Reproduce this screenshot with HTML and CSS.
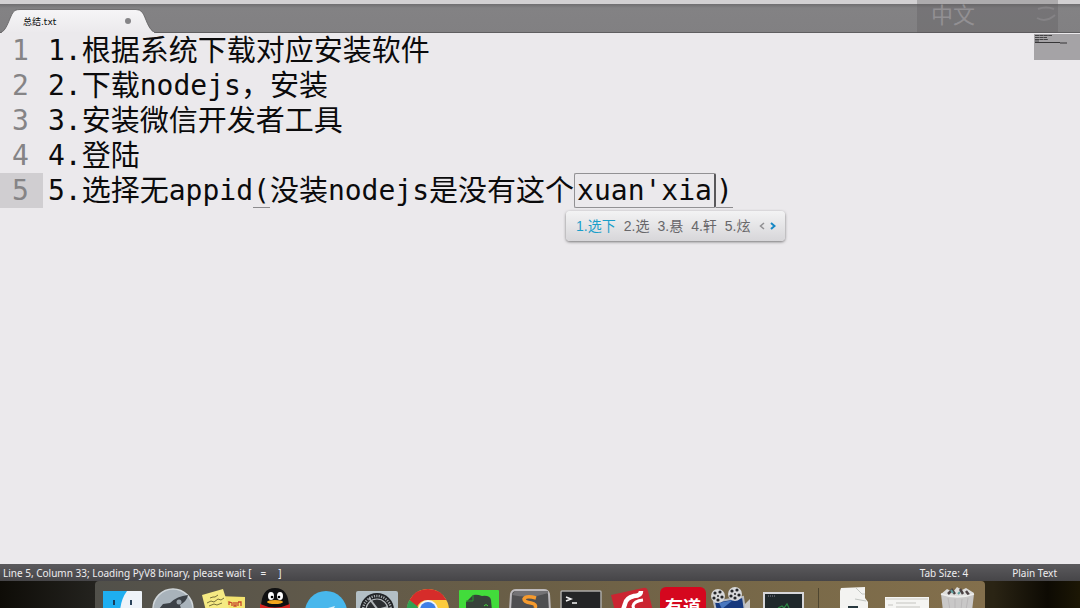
FILE: index.html
```
<!DOCTYPE html>
<html lang="zh-CN">

<head>
    <meta charset="UTF-8">
    <meta name="viewport" content="width=device-width, initial-scale=1.0">
    <title>总结.txt</title>
    <link rel="stylesheet" href="styles.css">
</head>

<body>

    <header class="tab-bar">
        <div class="tab">
            <svg class="tab-shape" viewBox="0 0 156 24" preserveAspectRatio="none" aria-hidden="true">
                <defs>
                    <linearGradient id="tabFill" x1="0" y1="0" x2="0" y2="1">
                        <stop offset="0" stop-color="#f6f5f7" />
                        <stop offset="1" stop-color="#ebe9ec" />
                    </linearGradient>
                </defs>
                <path d="M0 24 C8 22 10 4 15 1.500 Q17 0.500 20 0.500 H136 Q140 0.500 142 3 C146 8 148 22 156 24 Z" fill="url(#tabFill)" stroke="#5f5e60" stroke-width="0.800" />
                <path d="M2 24 H154" stroke="#ebe9ec" stroke-width="2" />
            </svg>
            <button class="tab-title">总结.txt</button>
            <span class="tab-dirty"></span>
        </div>
        <div class="input-hud">
            <span>中文</span>
            <svg class="hud-mark" viewBox="0 0 20 16" aria-hidden="true">
                <path d="M2 3 Q10 0 18 3 M1 12 Q10 17 19 9" />
            </svg>
        </div>
    </header>

    <main class="editor">
        <ol class="lines">
            <li class="line"><span class="num">1</span><span class="code">1.<b>根据系统下载对应安装软件</b></span></li>
            <li class="line"><span class="num">2</span><span class="code">2.<b>下载</b>nodejs<b>，安装</b></span></li>
            <li class="line"><span class="num">3</span><span class="code">3.<b>安装微信开发者工具</b></span></li>
            <li class="line"><span class="num">4</span><span class="code">4.<b>登陆</b></span></li>
            <li class="line current"><span class="num">5</span><span class="code">5.<b>选择无</b>appid<span class="bracket">(</span><b>没装</b>nodejs<b>是没有这个</b><span class="composing">xuan'xia<span class="candidates">
                <button class="picked">1.选下</button>
                <button>2.选</button>
                <button>3.悬</button>
                <button>4.轩</button>
                <button>5.炫</button>
                <button class="arrow" aria-label="Previous"><svg viewBox="0 0 6 8"><path d="M5 1 L1.500 4 L5 7" /></svg></button>
                <button class="arrow next" aria-label="Next"><svg viewBox="0 0 6 8"><path d="M1 1 L4.500 4 L1 7" /></svg></button>
            </span></span><span class="bracket">)</span></span></li>
        </ol>
        <svg class="minimap" viewBox="0 0 46 26" aria-hidden="true">
            <rect width="46" height="26" fill="#a5a3a6" />
            <path d="M1 1.500 H18 M1 3.500 H13 M1 5.500 H14 M1 7 H5" stroke="#454446" stroke-width="1.200" stroke-dasharray="4 .4" />
            <path d="M1 8.500 H26 M26 9 H33" stroke="#363537" stroke-width="1.200" />
        </svg>
    </main>

    <footer class="status-bar">
        <span class="status-message">Line 5, Column 33; Loading PyV8 binary, please wait [</span>
        <span class="spinner">=</span>
        <span class="spinner-end">]</span>
        <span class="tab-size">Tab Size: 4</span>
        <span class="syntax">Plain Text</span>
    </footer>

    <div class="desktop">
        <nav class="dock">
            <div class="dock-group">
                <!-- Finder -->
                <svg class="app" viewBox="0 0 46 27">
                    <rect x="4" y="10" width="39" height="20" rx="1" fill="#eef3f9" />
                    <path d="M4 10 H28 Q22 18 21 30 H4 Z" fill="#1eaef0" />
                    <path d="M15 19 V24 M32 19 V24" stroke="#17314a" stroke-width="1.800" />
                </svg>
                <!-- Launchpad -->
                <svg class="app" viewBox="0 0 46 27">
                    <circle cx="23" cy="28" r="20" fill="#a9b3bb" stroke="#d0d6da" stroke-width="1.500" />
                    <path d="M38 14 Q27 15 20 22 L13 23 L9 28 H31 L30 24 Q37 20 38 14 Z" fill="#3c4147" />
                    <circle cx="29" cy="21" r="2.500" fill="#9aa3aa" />
                </svg>
                <!-- Stickies -->
                <svg class="app" viewBox="0 0 46 27">
                    <path d="M17 15 L44 16 V30 H17 Z" fill="#f3e36f" />
                    <path d="M1 14 L22 8 L29 30 H5 Z" fill="#f5ea83" />
                    <path d="M9 17 l3 -1 2 0 3 -2 M6 22 l4 -2 3 1 4 -3 3 1 3 -2 M8 25 l5 -2 3 1 5 -2" fill="none" stroke="#777039" stroke-width="1" />
                    <path d="M28 24 v-3 l3 1 v3 m2 -4 v4 h2 v-4 m2 0 v4 m0 -4 h3 v4" fill="none" stroke="#c6472c" stroke-width="1.300" />
                </svg>
                <!-- QQ -->
                <svg class="app" viewBox="0 0 46 27">
                    <path d="M9 27 Q9 7 23 7 Q37 7 37 27 Z" fill="#101011" />
                    <ellipse cx="19" cy="15" rx="3" ry="4" fill="#fff" />
                    <ellipse cx="28" cy="15" rx="3" ry="4" fill="#fff" />
                    <circle cx="20" cy="16" r="1.300" />
                    <circle cx="27" cy="16" r="1.300" />
                    <ellipse cx="23" cy="21" rx="8" ry="2" fill="#f3a51c" />
                    <path d="M8 23 Q23 30 38 23 V28 H8 Z" fill="#d42320" />
                </svg>
                <!-- Bird -->
                <svg class="app" viewBox="0 0 46 27">
                    <circle cx="23" cy="31" r="21" fill="#48b7ec" />
                    <path d="M25 27 L32 25 L31 27 Z" fill="#d8f0fc" />
                </svg>
                <!-- System preferences -->
                <svg class="app" viewBox="0 0 46 27">
                    <rect x="2" y="10" width="42" height="22" rx="2" fill="#b3bfc5" />
                    <circle cx="23" cy="29" r="17" fill="#202225" />
                    <circle cx="23" cy="29" r="14" fill="none" stroke="#a2a7aa" stroke-width="2.500" stroke-dasharray="1.200 1.200" />
                    <circle cx="23" cy="29" r="11" fill="#2b2e31" stroke="#b6babd" stroke-width="1.200" />
                    <path d="M15 17 L24 29 M23 29 L34 26" stroke="#aeb3b6" stroke-width="2" />
                </svg>
                <!-- Chrome -->
                <svg class="app" viewBox="0 0 46 27">
                    <circle cx="23" cy="29" r="21" fill="#fccb3d" />
                    <path d="M4.500 19 A21 21 0 0 1 41.500 19 H23 Q14 19 12 27 Z" fill="#d62c2a" />
                    <path d="M4.500 19 Q1 24 2 30 H15 L12 25 Z" fill="#31a153" />
                    <circle cx="23" cy="29" r="10" fill="#f2f5fa" />
                    <circle cx="23" cy="29" r="8" fill="#3f80e6" />
                </svg>
                <!-- Evernote -->
                <svg class="app" viewBox="0 0 46 27">
                    <rect x="3" y="9" width="40" height="22" rx="1" fill="#42dc3b" />
                    <path d="M10 21 L17 14 Q21 13 26 15 Q34 14 35 19 L36 30 H10 Z" fill="#37423a" />
                    <path d="M10 20 H17 V14" fill="none" stroke="#299a2d" stroke-width="1" />
                    <path d="M28 25 Q30 22 32 25" fill="none" stroke="#42dc3b" stroke-width="1" />
                </svg>
                <!-- Sublime Text -->
                <svg class="app" viewBox="0 0 46 27">
                    <path d="M4 13 Q5 9 9 9 H37 Q41 9 42 13 L43 30 H3 Z" fill="#4f4f51" stroke="#bdbabd" stroke-width="2" />
                    <path d="M5 14 Q24 18 41 12 V10 H8 Z" fill="#737275" />
                    <path d="M29 17 Q19 14 17 18 Q17 21 24 22 Q30 23 28 27" fill="none" stroke="#f59a2e" stroke-width="3.500" />
                </svg>
                <!-- Terminal -->
                <svg class="app" viewBox="0 0 46 27">
                    <rect x="3" y="10" width="40" height="22" rx="1" fill="#242526" stroke="#aaa9a6" stroke-width="1.500" />
                    <path d="M8 16 L13 18 L8 20 M14 22 H19" fill="none" stroke="#f3f3f3" stroke-width="1.500" />
                </svg>
                <!-- Red tile -->
                <svg class="app" viewBox="0 0 46 27">
                    <path d="M2 14 L34 7 Q38 6 39 10 L44 30 H6 Z" fill="#cb2531" />
                    <path d="M32 10 Q32 15 25 15 Q17 17 16 23 L14 29" fill="none" stroke="#fff" stroke-width="4.500" />
                    <path d="M34 19 Q25 20 24 25 L25 29" fill="none" stroke="#fff" stroke-width="3" />
                </svg>
                <!-- Youdao -->
                <svg class="app" viewBox="0 0 46 27">
                    <rect x="0" y="6" width="46" height="34" rx="6" fill="#d5071e" />
                    <text class="youdao" x="5" y="33">有道</text>
                </svg>
                <!-- Film player -->
                <svg class="app" viewBox="0 0 46 27">
                    <path d="M3 21 L32 16 L34 30 H5 Z" fill="#17397d" stroke="#b7bac0" stroke-width="2" />
                    <path d="M8 22 L22 19 L11 28 Z" fill="#4977be" />
                    <path d="M34 23 L39 18 V28 H34 Z" fill="#c8c6c4" />
                    <circle cx="7" cy="15" r="7" fill="#d7d8da" />
                    <circle cx="24" cy="13" r="7" fill="#d7d8da" />
                    <g fill="#242629">
                        <circle cx="7" cy="15" r="1" /><circle cx="4" cy="12" r="1.600" /><circle cx="9" cy="11" r="1.600" /><circle cx="11" cy="16" r="1.600" /><circle cx="7" cy="19" r="1.600" /><circle cx="3" cy="17" r="1.600" />
                        <circle cx="24" cy="13" r="1" /><circle cx="21" cy="10" r="1.600" /><circle cx="26" cy="9" r="1.600" /><circle cx="28" cy="14" r="1.600" /><circle cx="24" cy="17" r="1.600" /><circle cx="20" cy="15" r="1.600" />
                    </g>
                </svg>
                <!-- Activity monitor -->
                <svg class="app" viewBox="0 0 46 27">
                    <rect x="2" y="12" width="39" height="22" fill="#20282b" stroke="#d6d6d9" stroke-width="2" />
                    <path d="M6 15 H13" stroke="#889" stroke-width="1" stroke-dasharray="1 1" />
                    <path d="M16 27 L20 25 L22 27 L25 23 L27 27" fill="none" stroke="#2d8844" stroke-width="1.200" />
                </svg>
            </div>
            <span class="divider"></span>
            <div class="dock-group">
                <!-- Documents stack -->
                <svg class="app" viewBox="0 0 46 27">
                    <path d="M7 10 L8 7 L32 6 V17 L35 21 V30 H7 Z" fill="#f3f3f1" />
                    <path d="M23 7 L29 13 H32 M22 18 L33 20" fill="none" stroke="#c2c6c2" stroke-width="1" />
                    <rect x="15" y="25" width="10" height="4" fill="#27383e" />
                </svg>
                <!-- Minimised window -->
                <svg class="app" viewBox="0 0 46 27">
                    <rect x="1" y="16" width="44" height="16" fill="#f5f5f3" />
                    <path d="M2 18 H44" stroke="#d8d7d2" stroke-width="1.500" />
                    <path d="M12 22 H32 M4 24 H9 M12 26 H36" stroke="#c5c5c1" stroke-width="1" />
                </svg>
                <!-- Trash -->
                <svg class="app" viewBox="0 0 46 27">
                    <path d="M6 13 L12 8 L18 11 L22 6 L27 9 L31 7 L39 12 L36 18 H9 Z" fill="#dededd" />
                    <path d="M13 13 L17 9 L20 13 M25 8 L28 13 M31 10 L34 14" stroke="#4c4244" stroke-width="2.500" fill="none" />
                    <path d="M16 9 L18 12 M23 13 L25 11" stroke="#60a0a0" stroke-width="2" />
                    <path d="M6 13 Q22 19 39 13 L37 30 H8 Z" fill="#c9c8c8" />
                    <path d="M6 13 Q22 19 39 13" fill="none" stroke="#eeeeed" stroke-width="1.500" />
                    <path d="M13 17 L15 29 M20 18 V29 M27 18 L26 29 M33 17 L31 29" stroke="#b9b7b8" stroke-width="1" />
                </svg>
            </div>
        </nav>
    </div>

</body>

</html>
```
FILE: styles.css
```
* {
    box-sizing: border-box;
}

body {
    margin: 0;
    height: 100vh;
    display: flex;
    flex-direction: column;
    overflow: hidden;
    background-color: #ebe9ec;
    font-family: 'Noto Sans', 'Noto Sans CJK SC', sans-serif;
    color: #0b0b0c;
}

button {
    margin: 0;
    padding: 0;
    border: none;
    background: none;
    font: inherit;
    color: inherit;
    cursor: pointer;
}

.tab-bar {
    display: flex;
    justify-content: space-between;
    align-items: flex-end;
    height: 33px;
    padding-right: 22px;
    border-top: 4px solid #d2d0d2;
    background: linear-gradient(#6f6e70, #838284 4px, #818082);
    box-shadow: inset 0 -1px #5f5e60;
}

.tab {
    position: relative;
    display: flex;
    align-items: center;
    justify-content: space-between;
    width: 156px;
    height: 24px;
    padding: 0 25px 0 23px;
    font-family: 'DejaVu Sans', 'Noto Sans CJK SC', sans-serif;
    font-size: 9px;
}

.tab-shape {
    position: absolute;
    inset: 0;
    width: 100%;
    height: 100%;
}

.tab-title {
    position: relative;
}

.tab-dirty {
    position: relative;
    width: 6px;
    height: 6px;
    border-radius: 50%;
    background-color: #858487;
}

.input-hud {
    display: flex;
    justify-content: space-between;
    align-items: center;
    width: 141px;
    height: 33px;
    padding: 0 2px 6px 14px;
    background-color: rgba(90, 86, 90, 0.3);
    font-size: 22px;
    line-height: 26px;
    color: #929093;
}

.hud-mark {
    width: 20px;
    height: 16px;
    fill: none;
    stroke: #858386;
    stroke-width: 2;
}

.editor {
    flex: 1;
    display: flex;
    align-items: flex-start;
}

.lines {
    flex: 1;
    margin: 0;
    padding: 0;
    list-style: none;
    font-family: 'DejaVu Sans Mono', 'Noto Sans CJK SC', monospace;
    font-size: 28px;
    line-height: 35px;
}

.line {
    display: flex;
    height: 35px;
}

.num {
    width: 43px;
    padding-left: 12px;
    color: #858486;
}

.current .num {
    background-color: #d0ced1;
}

.code {
    padding-left: 5px;
    white-space: nowrap;
}

.code b {
    font-family: 'Noto Sans CJK SC', sans-serif;
    font-size: 29px;
    font-weight: 400;
    line-height: 1;
    vertical-align: -1px;
}

.bracket {
    display: inline-block;
    height: 35px;
    border-bottom: 1px solid #8c8b8e;
    vertical-align: top;
}

.composing {
    position: relative;
    display: inline-block;
    height: 35px;
    padding: 0 2px;
    border: 1px solid #929194;
    border-right: 2px solid #59585b;
    border-radius: 2px;
    line-height: 33px;
    vertical-align: top;
}

.candidates {
    position: absolute;
    top: 37px;
    left: -9px;
    display: flex;
    align-items: center;
    gap: 8px;
    height: 30px;
    padding: 0 9px 0 10px;
    border-radius: 4px;
    background: linear-gradient(#f3f3f4, #d7d6d9);
    box-shadow: 0 1px 3px rgba(0, 0, 0, 0.5);
    font-family: 'Liberation Sans', 'Noto Sans CJK SC', sans-serif;
    font-size: 14px;
    line-height: 20px;
    color: #68676a;
}

.picked {
    color: #1c9fca;
}

.arrow {
    display: flex;
    width: 6px;
}

.arrow + .arrow {
    margin-left: -3px;
}

.arrow svg {
    width: 6px;
    height: 8px;
    fill: none;
    stroke: #919093;
    stroke-width: 1.5;
}

.next svg {
    stroke: #1688c5;
    stroke-width: 2;
}

.minimap {
    width: 46px;
    height: 26px;
    margin-top: 1px;
}

.status-bar {
    display: flex;
    align-items: center;
    height: 17px;
    padding: 0 23px 0 3px;
    background: linear-gradient(#5b5a5d, #464548);
    font-size: 10px;
    color: #eeedef;
}

.spinner {
    margin-left: 9px;
}

.spinner-end {
    margin-left: 12px;
}

.tab-size {
    margin-left: auto;
}

.syntax {
    margin-left: 44px;
}

.desktop {
    display: flex;
    justify-content: center;
    height: 27px;
    background: linear-gradient(90deg, #0e0c07, #24231f 9%, #2a2414 92%, #0d0a03 97%, #1c1705);
}

.dock {
    display: flex;
    padding: 0 4px;
    border-radius: 4px 4px 0 0;
    background: linear-gradient(90deg, #51504a, #60594a 25%, #6b5f46 50%, #7a6a49 80%, #836f4c);
}

.dock-group {
    display: flex;
    gap: 5px;
}

.app {
    width: 46px;
    height: 27px;
}

.youdao {
    font-family: 'Noto Sans CJK SC', sans-serif;
    font-size: 18px;
    font-weight: 700;
    fill: #fff;
}

.divider {
    width: 1px;
    margin: 7px 14px 0 10px;
    background-color: #4f4630;
}
```
